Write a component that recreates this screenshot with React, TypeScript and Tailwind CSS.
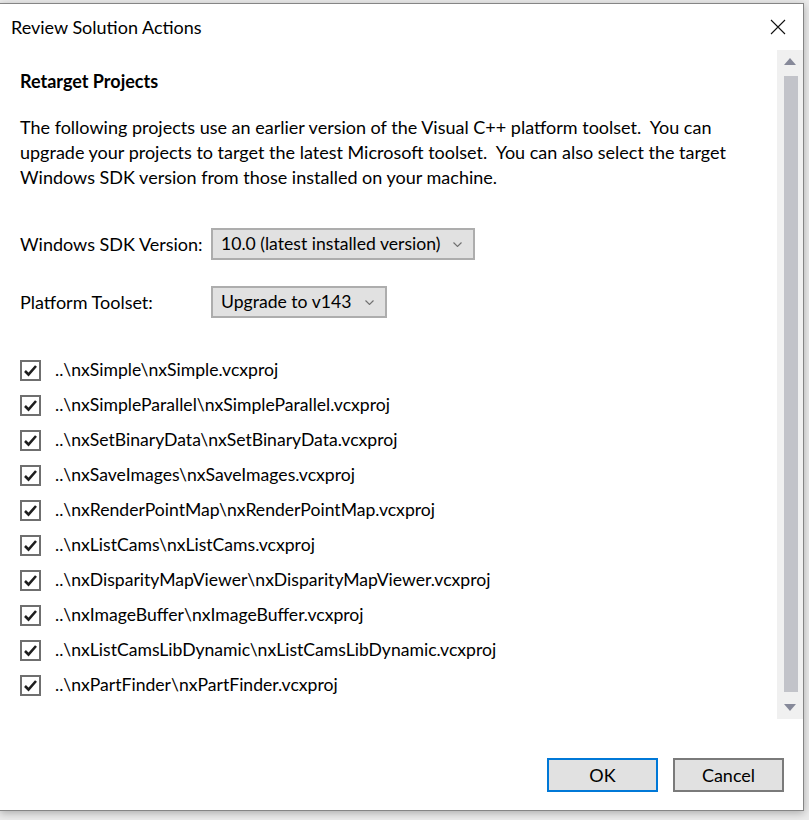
import React from "react";

const projects = [
  "..\\nxSimple\\nxSimple.vcxproj",
  "..\\nxSimpleParallel\\nxSimpleParallel.vcxproj",
  "..\\nxSetBinaryData\\nxSetBinaryData.vcxproj",
  "..\\nxSaveImages\\nxSaveImages.vcxproj",
  "..\\nxRenderPointMap\\nxRenderPointMap.vcxproj",
  "..\\nxListCams\\nxListCams.vcxproj",
  "..\\nxDisparityMapViewer\\nxDisparityMapViewer.vcxproj",
  "..\\nxImageBuffer\\nxImageBuffer.vcxproj",
  "..\\nxListCamsLibDynamic\\nxListCamsLibDynamic.vcxproj",
  "..\\nxPartFinder\\nxPartFinder.vcxproj",
];

const Chevron: React.FC = () => (
  <svg width="9" height="5" viewBox="0 0 9 5" className="shrink-0">
    <path d="M0.5 0.5 L4.5 4.5 L8.5 0.5" fill="none" stroke="#707070" strokeWidth="1.1" />
  </svg>
);

const Dropdown: React.FC<{ value: string; width: string }> = ({ value, width }) => (
  <div
    className={`${width} h-[32px] border-2 border-[#adadad] bg-[#e1e1e1] flex items-center justify-between pl-[8px] pr-[11px] text-[17.6px]`}
  >
    <span>{value}</span>
    <Chevron />
  </div>
);

const CheckBox: React.FC = () => (
  <div className="w-[21px] h-[21px] border-2 border-[#6f6f6f] bg-white flex items-center justify-center shrink-0">
    <svg width="15" height="13" viewBox="0 0 15 13">
      <path d="M2 7 L5.5 10.5 L13 2" fill="none" stroke="#1e1e1e" strokeWidth="2.6" />
    </svg>
  </div>
);

const App: React.FC = () => {
  return (
    <div
      className="w-[809px] h-[820px] bg-[#ebebeb] overflow-hidden pt-[3px] text-black"
      style={{ fontFamily: '"Segoe UI", Lato, "Noto Sans", sans-serif' }}
    >
      <div className="w-[804px] h-[808px] bg-white border-t border-r border-b border-[#858585] flex flex-col shadow-[0_2px_8px_rgba(0,0,0,0.28)]">
        {/* title bar */}
        <div className="h-[46px] flex items-center justify-between pl-[11px] pr-[17px] shrink-0">
          <span className="text-[18px]">Review Solution Actions</span>
          <svg width="16" height="16" viewBox="0 0 16 16">
            <path d="M1 1 L15 15 M15 1 L1 15" stroke="#111" strokeWidth="1.1" />
          </svg>
        </div>

        {/* scrolling content */}
        <div className="flex h-[669px] shrink-0">
          <div className="flex-1 pl-[20px] text-[18px]">
            <div className="pt-[21px] font-bold leading-[20px]">Retarget Projects</div>
            <p className="mt-[24px] leading-[25px]">
              The following projects use an earlier version of the Visual C++ platform toolset.&nbsp; You can
              <br />
              upgrade your projects to target the latest Microsoft toolset.&nbsp; You can also select the target
              <br />
              Windows SDK version from those installed on your machine.
            </p>

            <div className="mt-[38px] flex items-center">
              <span className="w-[191px]">Windows SDK Version:</span>
              <Dropdown value="10.0 (latest installed version)" width="w-[264px]" />
            </div>
            <div className="mt-[26px] flex items-center">
              <span className="w-[191px]">Platform Toolset:</span>
              <Dropdown value="Upgrade to v143" width="w-[176px]" />
            </div>

            <div className="mt-[35px] flex flex-col text-[17.6px]">
              {projects.map((p) => (
                <div key={p} className="h-[35px] flex items-center gap-[14px]">
                  <CheckBox />
                  <span>{p}</span>
                </div>
              ))}
            </div>
          </div>

          {/* scrollbar */}
          <div className="w-[26px] bg-[#f0f0f0] flex flex-col items-center pt-[8px] pb-[8px]">
            <svg width="12" height="7" viewBox="0 0 12 7" className="shrink-0">
              <path d="M0 7 L6 0 L12 7 Z" fill="#868999" />
            </svg>
            <div className="mt-[11px] w-[14px] flex-1 bg-[#c2c3c9] ml-[2px]" />
            <svg width="12" height="7" viewBox="0 0 12 7" className="mt-[12px] shrink-0">
              <path d="M0 0 L6 7 L12 0 Z" fill="#868999" />
            </svg>
          </div>
        </div>

        {/* footer */}
        <div className="flex-1 flex items-start justify-end gap-[15px] pt-[39px] pr-[19px] text-[18px]">
          <button className="w-[111px] h-[34px] border-2 border-[#0078d7] bg-[#e1e1e1]">OK</button>
          <button className="w-[111px] h-[34px] border-2 border-[#7a7a7a] bg-[#e1e1e1]">Cancel</button>
        </div>
      </div>
    </div>
  );
};

export default App;
